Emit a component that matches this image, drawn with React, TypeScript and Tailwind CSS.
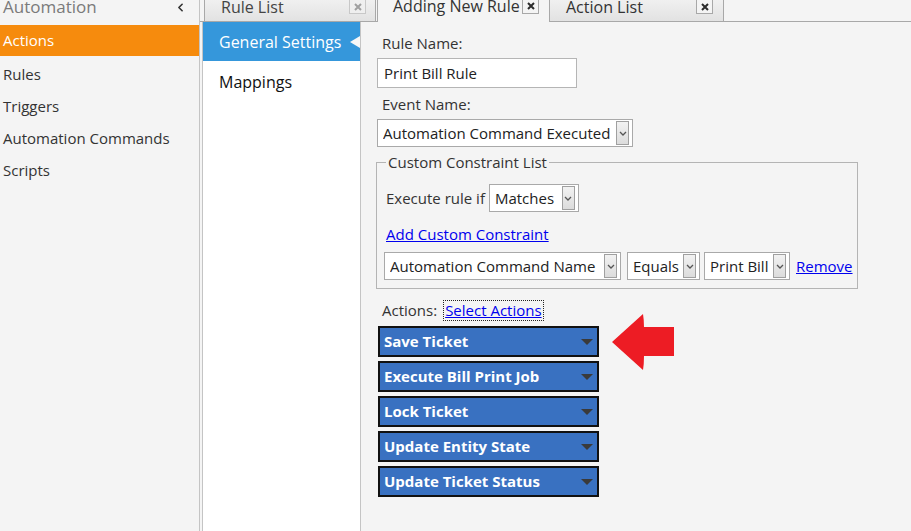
import { ChevronLeft } from 'lucide-react';

const font = { fontFamily: '"Open Sans", "Noto Sans", sans-serif' };

function CloseBox({ dim }: { dim?: boolean }) {
  return (
    <span
      className={`flex items-center justify-center w-[17px] h-[15px] border ${
        dim ? 'border-[#c8c8c8] bg-[#efefef]' : 'border-[#a8a8a8] bg-[#f4f4f4]'
      }`}
    >
      <svg width="8" height="8" viewBox="0 0 8 8">
        <path
          d="M1 1L7 7M7 1L1 7"
          stroke={dim ? '#a0a0a0' : '#2b2b2b'}
          strokeWidth="2"
        />
      </svg>
    </span>
  );
}

function Select({ value, width }: { value: string; width: string }) {
  return (
    <div className={`${width} h-[28px] flex items-center bg-white border border-[#a9a9a9] pl-[5px] pr-[3px]`}>
      <span className="flex-1 whitespace-nowrap overflow-hidden text-[#222]">{value}</span>
      <span className="flex items-center justify-center w-[13px] h-[24px] border border-[#a0a0a0] bg-gradient-to-b from-[#f2f2f2] to-[#dcdcdc]">
        <svg width="8" height="5" viewBox="0 0 8 5">
          <path d="M1 1L4 4L7 1" stroke="#555" strokeWidth="1.3" fill="none" />
        </svg>
      </span>
    </div>
  );
}

function ActionButton({ label }: { label: string }) {
  return (
    <div className="w-[221px] h-[31px] flex items-center bg-[#3971c1] border-2 border-[#111] pl-[4px] pr-[4px]">
      <span className="flex-1 text-white font-bold text-[15px]">{label}</span>
      <svg width="12" height="6" viewBox="0 0 12 6">
        <path d="M0 0H12L6 6Z" fill="#3a3a3a" />
      </svg>
    </div>
  );
}

export default function App() {
  const menu = ['Rules', 'Triggers', 'Automation Commands', 'Scripts'];
  const actions = ['Execute Bill Print Job', 'Lock Ticket', 'Update Entity State', 'Update Ticket Status'];

  return (
    <div className="w-[911px] h-[531px] overflow-hidden flex bg-[#f4f4f4] text-[15px]" style={font}>
      <aside className="w-[200px] shrink-0 border-r border-[#c4c4c4] flex flex-col">
        <div className="h-[25px] flex items-start justify-between pl-[3px] pr-[12px]">
          <span className="-mt-[6px] text-[17px] text-[#7a7a7a]">Automation</span>
          <ChevronLeft size={13} strokeWidth={3} className="mt-[1px] text-[#333]" />
        </div>
        <div className="h-[31px] flex items-center pl-[3px] bg-[#f68b0d] text-white">Actions</div>
        <div className="mt-[2px] flex flex-col">
          {menu.map((m) => (
            <div key={m} className="h-[32px] flex items-center pl-[3px] text-[#333]">
              {m}
            </div>
          ))}
        </div>
      </aside>

      <div className="flex-1 flex flex-col">
        <div className="h-[22px] flex shrink-0">
          <div className="w-[4px] border-b border-[#a8a8a8]" />
          <div className="w-[172px] flex items-center justify-between pl-[16px] pr-[9px] pb-[8px] border-x border-b border-[#a8a8a8] bg-gradient-to-b from-[#f0f0f0] to-[#e2e2e2]">
            <span className="text-[16px] text-[#444]">Rule List</span>
            <CloseBox dim />
          </div>
          <div className="w-[1px] border-b border-[#a8a8a8]" />
          <div className="w-[173px] flex items-center justify-between pl-[15px] pr-[10px] pb-[10px] border-x border-[#a8a8a8] bg-[#f4f4f4]">
            <span className="text-[16px] text-[#333]">Adding New Rule</span>
            <CloseBox />
          </div>
          <div className="w-[174px] flex items-center justify-between pl-[16px] pr-[10px] pb-[8px] border-r border-b border-[#a8a8a8] bg-gradient-to-b from-[#f0f0f0] to-[#e2e2e2]">
            <span className="text-[16px] text-[#333]">Action List</span>
            <CloseBox />
          </div>
          <div className="flex-1 border-b border-[#a8a8a8]" />
        </div>

        <div className="flex-1 flex">
          <nav className="ml-[2px] w-[159px] shrink-0 bg-white border-x border-[#c4c4c4] flex flex-col">
            <div className="relative h-[39px] flex items-center pl-[16px] bg-[#3597db] text-white text-[16px]">
              General Settings
              <svg className="absolute right-0 top-[14px]" width="10" height="12" viewBox="0 0 10 12">
                <path d="M10 0L0 6L10 12Z" fill="#f7f7f7" />
              </svg>
            </div>
            <div className="h-[42px] flex items-center pl-[16px] text-[16px] text-[#111]">Mappings</div>
          </nav>

          <main className="flex-1 flex flex-col pl-[16px] pt-[11px] text-[#333]">
            <div className="pl-[5px] leading-[20px]">Rule Name:</div>
            <div className="mt-[5px] w-[200px] h-[30px] flex items-center bg-white border border-[#b5b5b5] pl-[6px] text-[#222]">
              Print Bill Rule
            </div>
            <div className="mt-[6px] pl-[5px] leading-[20px]">Event Name:</div>
            <div className="mt-[5px]">
              <Select value="Automation Command Executed" width="w-[256px]" />
            </div>

            <fieldset className="mt-[5px] -ml-px w-[481px] border border-[#b4b4b4] pl-[9px] pr-[4px] pb-[8px]">
              <legend className="px-[2px] leading-[20px]">Custom Constraint List</legend>
              <div className="mt-[12px] flex items-center gap-[4px]">
                <span>Execute rule if</span>
                <Select value="Matches" width="w-[90px]" />
              </div>
              <a className="mt-[12px] block leading-[20px] text-[#0000ee] underline" href="#">
                Add Custom Constraint
              </a>
              <div className="mt-[8px] -ml-[2px] flex items-center">
                <Select value="Automation Command Name" width="w-[237px]" />
                <div className="ml-[6px]">
                  <Select value="Equals" width="w-[73px]" />
                </div>
                <div className="ml-[4px]">
                  <Select value="Print Bill" width="w-[86px]" />
                </div>
                <a className="ml-[6px] text-[#0000ee] underline" href="#">
                  Remove
                </a>
              </div>
            </fieldset>

            <div className="mt-[11px] h-[21px] flex items-center pl-[5px]">
              <span>Actions:</span>
              <a className="ml-[6px] px-px border border-dotted border-[#222] text-[#0000ee] underline leading-[19px]" href="#">
                Select Actions
              </a>
            </div>

            <div className="mt-[5px] ml-px flex flex-col gap-[4px]">
              <div className="flex items-center h-[31px]">
                <ActionButton label="Save Ticket" />
                <svg className="ml-[13px]" width="62" height="56" viewBox="0 0 62 56">
                  <path d="M0 28L31 0Q32 6 32 13H62V42H32Q32 50 31 56Z" fill="#ed1c24" />
                </svg>
              </div>
              {actions.map((a) => (
                <ActionButton key={a} label={a} />
              ))}
            </div>
          </main>
        </div>
      </div>
    </div>
  );
}
